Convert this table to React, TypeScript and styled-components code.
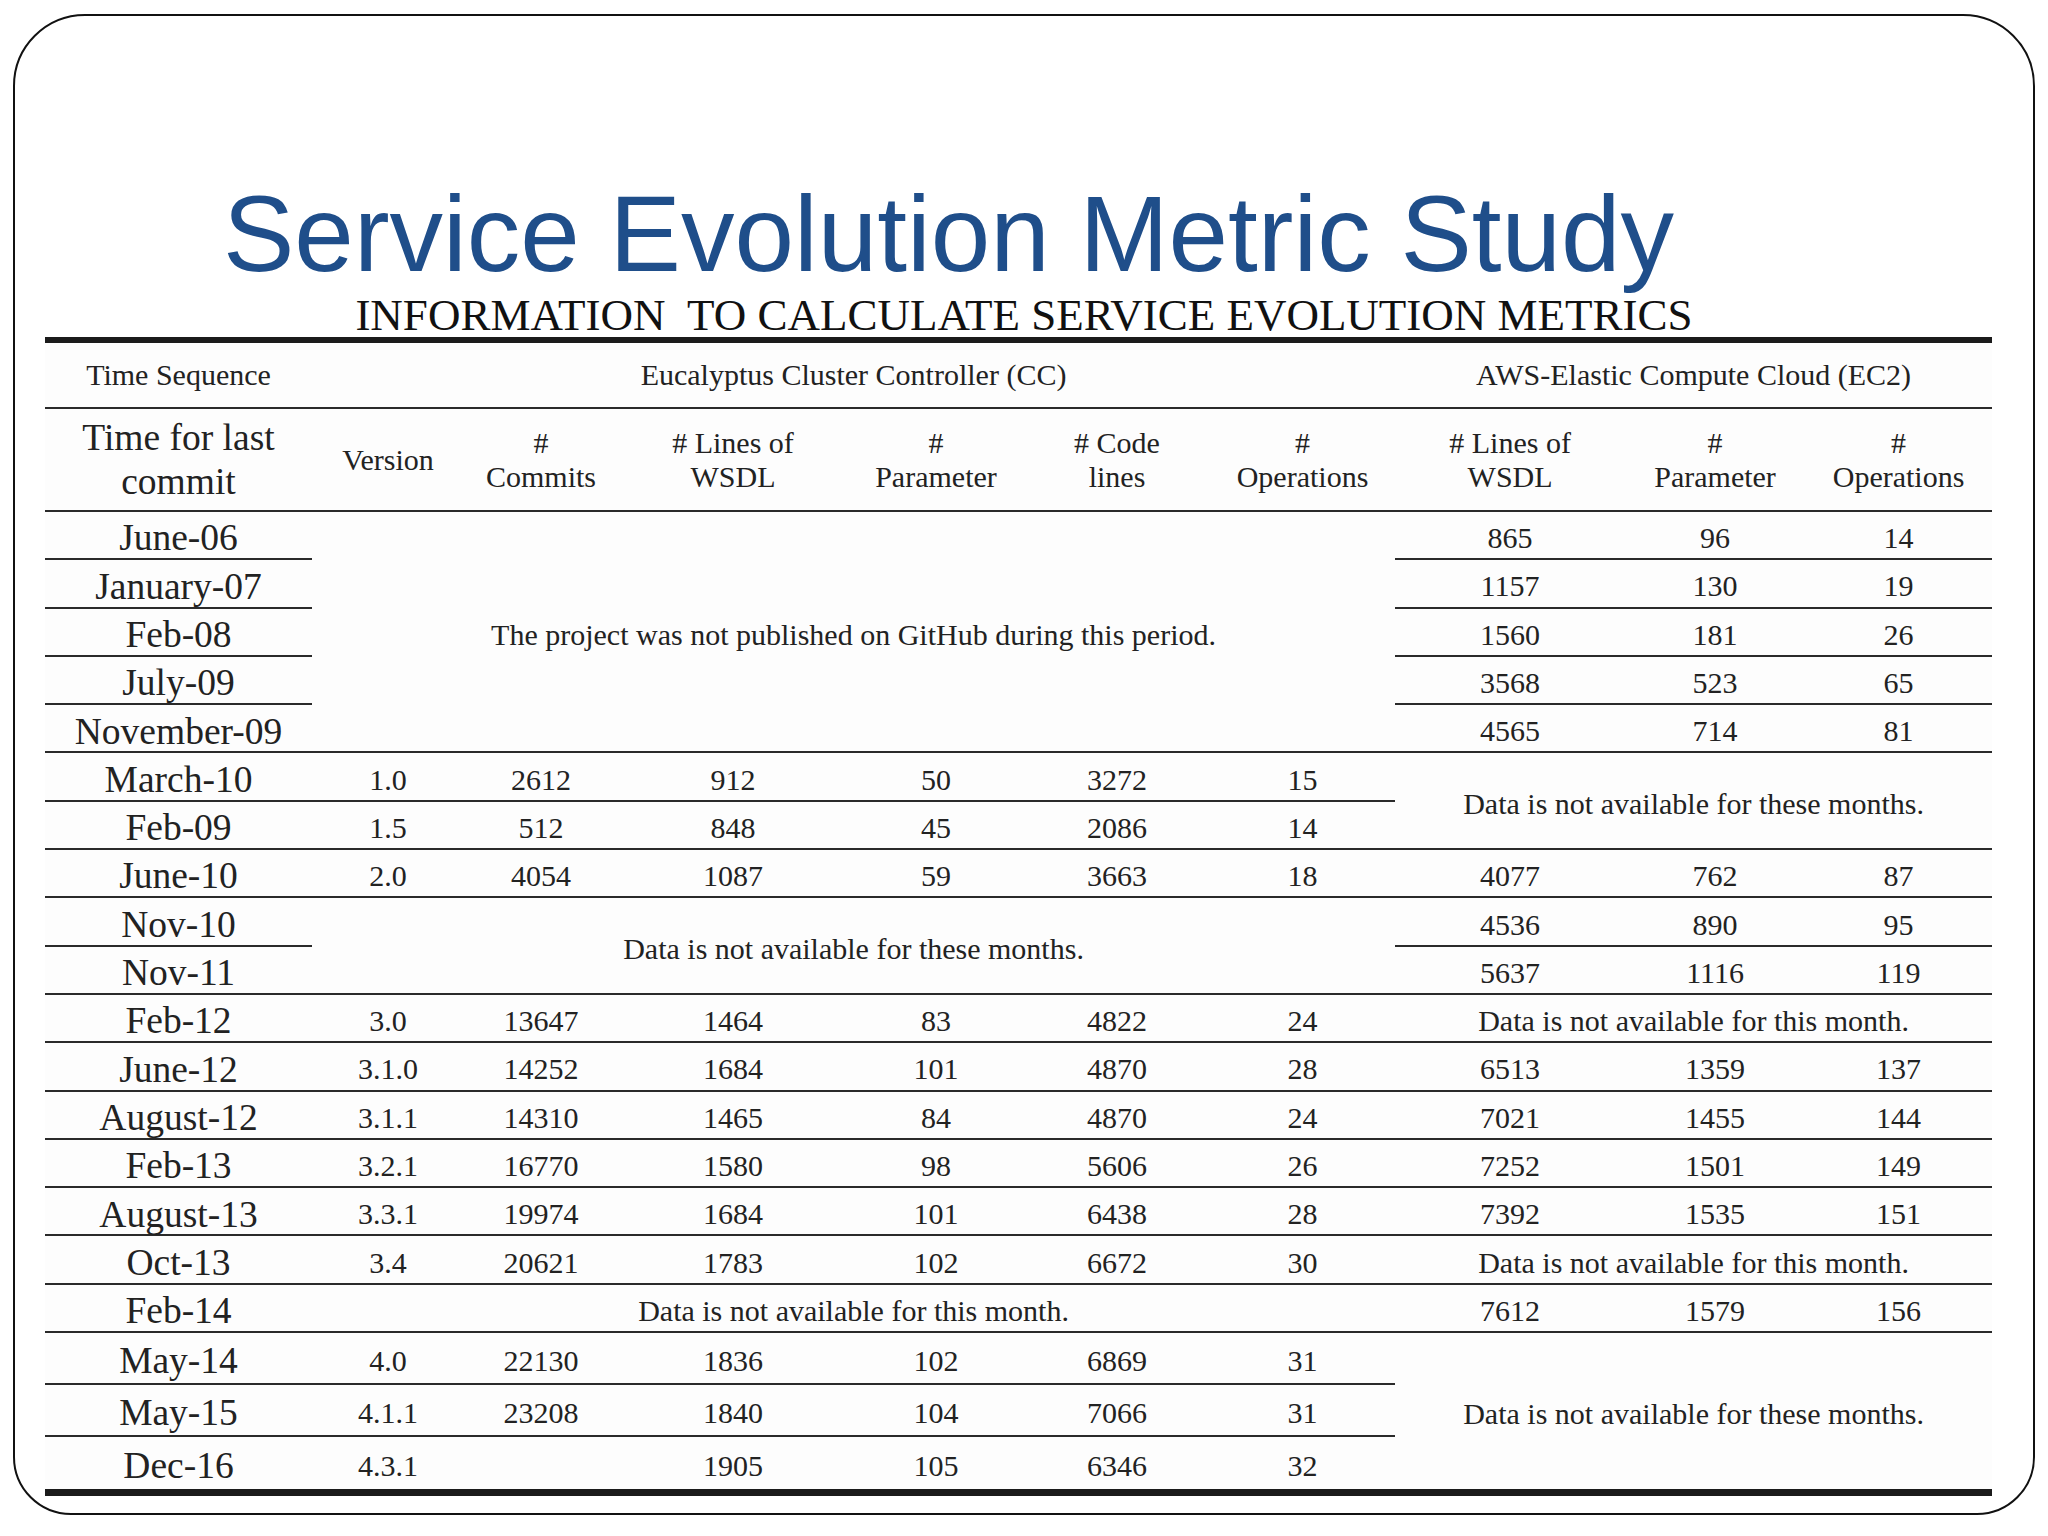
import React from "react";
import styled, { createGlobalStyle } from "styled-components";

const GlobalStyle = createGlobalStyle`
  html, body {
    margin: 0;
    padding: 0;
    background: #ffffff;
  }
  body {
    width: 2048px;
    height: 1536px;
    overflow: hidden;
  }
`;

const Page = styled.div`
  box-sizing: border-box;
  width: 2048px;
  height: 1536px;
  padding: 14px 13px 21px 13px;
  background: #ffffff;
`;

const Frame = styled.div`
  box-sizing: border-box;
  height: 100%;
  border: 2px solid #111111;
  border-radius: 72px 72px 58px 58px;
  padding-top: 165px;
  display: flex;
  flex-direction: column;
`;

const Title = styled.h1`
  margin: 0;
  padding-left: 208px;
  font-family: "Liberation Sans", Arial, sans-serif;
  font-weight: 400;
  font-size: 107px;
  line-height: 107px;
  color: #1f4e8a;
  white-space: nowrap;
`;

const Subtitle = styled.h2`
  margin: 5px 0 0 0;
  text-align: center;
  font-family: "Liberation Serif", "Times New Roman", serif;
  font-weight: 400;
  font-size: 45px;
  line-height: 44px;
  color: #111111;
  white-space: nowrap;
`;

const Table = styled.table`
  margin-left: 30px;
  width: 1947px;
  table-layout: fixed;
  border-collapse: separate;
  border-spacing: 0;
  border-top: 6px solid #1b1b1b;
  border-bottom: 7px solid #1b1b1b;
  font-family: "Liberation Serif", "Times New Roman", serif;
  color: #222222;
  background: #fdfdfd;
`;

const Row = styled.tr<{ $h: number }>`
  height: ${(p) => p.$h}px;
`;

const HeadCell = styled.th<{ $big?: boolean }>`
  box-sizing: border-box;
  padding: 0;
  text-align: center;
  vertical-align: middle;
  font-weight: 400;
  font-size: ${(p) => (p.$big ? "37.5px" : "30px")};
  line-height: ${(p) => (p.$big ? "44px" : "34px")};
  border-bottom: 2px solid #2a2a2a;
  white-space: nowrap;
`;

const Cell = styled.td<{ $big?: boolean; $line: boolean }>`
  box-sizing: border-box;
  padding: 6px 0 0 0;
  text-align: center;
  vertical-align: middle;
  font-size: ${(p) => (p.$big ? "37.5px" : "30px")};
  line-height: 1;
  border-bottom: ${(p) => (p.$line ? "2px solid #2a2a2a" : "0")};
  white-space: nowrap;
`;

type Span = { text: string; rows: number };
type Part = string[] | Span | "covered";
type DataRow = { t: string; cc: Part; ec: Part; h: number };

const NA_MONTHS = "Data is not available for these months.";
const NA_MONTH = "Data is not available for this month.";

const N = 48.3;
const T = 52;

const rows: DataRow[] = [
  { t: "June-06", cc: { text: "The project was not published on GitHub during this period.", rows: 5 }, ec: ["865", "96", "14"], h: N },
  { t: "January-07", cc: "covered", ec: ["1157", "130", "19"], h: N },
  { t: "Feb-08", cc: "covered", ec: ["1560", "181", "26"], h: N },
  { t: "July-09", cc: "covered", ec: ["3568", "523", "65"], h: N },
  { t: "November-09", cc: "covered", ec: ["4565", "714", "81"], h: N },
  { t: "March-10", cc: ["1.0", "2612", "912", "50", "3272", "15"], ec: { text: NA_MONTHS, rows: 2 }, h: N },
  { t: "Feb-09", cc: ["1.5", "512", "848", "45", "2086", "14"], ec: "covered", h: N },
  { t: "June-10", cc: ["2.0", "4054", "1087", "59", "3663", "18"], ec: ["4077", "762", "87"], h: N },
  { t: "Nov-10", cc: { text: NA_MONTHS, rows: 2 }, ec: ["4536", "890", "95"], h: N },
  { t: "Nov-11", cc: "covered", ec: ["5637", "1116", "119"], h: N },
  { t: "Feb-12", cc: ["3.0", "13647", "1464", "83", "4822", "24"], ec: { text: NA_MONTH, rows: 1 }, h: N },
  { t: "June-12", cc: ["3.1.0", "14252", "1684", "101", "4870", "28"], ec: ["6513", "1359", "137"], h: N },
  { t: "August-12", cc: ["3.1.1", "14310", "1465", "84", "4870", "24"], ec: ["7021", "1455", "144"], h: N },
  { t: "Feb-13", cc: ["3.2.1", "16770", "1580", "98", "5606", "26"], ec: ["7252", "1501", "149"], h: N },
  { t: "August-13", cc: ["3.3.1", "19974", "1684", "101", "6438", "28"], ec: ["7392", "1535", "151"], h: N },
  { t: "Oct-13", cc: ["3.4", "20621", "1783", "102", "6672", "30"], ec: { text: NA_MONTH, rows: 1 }, h: N },
  { t: "Feb-14", cc: { text: NA_MONTH, rows: 1 }, ec: ["7612", "1579", "156"], h: N },
  { t: "May-14", cc: ["4.0", "22130", "1836", "102", "6869", "31"], ec: { text: NA_MONTHS, rows: 3 }, h: T },
  { t: "May-15", cc: ["4.1.1", "23208", "1840", "104", "7066", "31"], ec: "covered", h: T },
  { t: "Dec-16", cc: ["4.3.1", "", "1905", "105", "6346", "32"], ec: "covered", h: T },
];

const colWidths = [267, 152, 154, 230, 176, 186, 185, 230, 180, 187];

const lastIndex = rows.length - 1;

function renderPart(part: Part, span: number, i: number, key: string) {
  if (part === "covered") return null;
  if (Array.isArray(part)) {
    const line = i !== lastIndex;
    return part.map((v, j) => (
      <Cell key={`${key}${j}`} $line={line}>
        {v}
      </Cell>
    ));
  }
  const line = i + part.rows - 1 !== lastIndex;
  return (
    <Cell key={key} colSpan={span} rowSpan={part.rows} $line={line}>
      {part.text}
    </Cell>
  );
}

export default function App() {
  return (
    <>
      <GlobalStyle />
      <Page>
        <Frame>
          <Title>Service Evolution Metric Study</Title>
          <Subtitle>INFORMATION&nbsp; TO CALCULATE SERVICE EVOLUTION METRICS</Subtitle>
          <Table>
            <colgroup>
              {colWidths.map((w, i) => (
                <col key={i} style={{ width: w }} />
              ))}
            </colgroup>
            <thead>
              <Row $h={66}>
                <HeadCell>Time Sequence</HeadCell>
                <HeadCell colSpan={6}>Eucalyptus Cluster Controller (CC)</HeadCell>
                <HeadCell colSpan={3}>AWS-Elastic Compute Cloud (EC2)</HeadCell>
              </Row>
              <Row $h={103}>
                <HeadCell $big>
                  Time for last
                  <br />
                  commit
                </HeadCell>
                <HeadCell>Version</HeadCell>
                <HeadCell>
                  #
                  <br />
                  Commits
                </HeadCell>
                <HeadCell>
                  # Lines of
                  <br />
                  WSDL
                </HeadCell>
                <HeadCell>
                  #
                  <br />
                  Parameter
                </HeadCell>
                <HeadCell>
                  # Code
                  <br />
                  lines
                </HeadCell>
                <HeadCell>
                  #
                  <br />
                  Operations
                </HeadCell>
                <HeadCell>
                  # Lines of
                  <br />
                  WSDL
                </HeadCell>
                <HeadCell>
                  #
                  <br />
                  Parameter
                </HeadCell>
                <HeadCell>
                  #
                  <br />
                  Operations
                </HeadCell>
              </Row>
            </thead>
            <tbody>
              {rows.map((r, i) => (
                <Row key={r.t} $h={r.h}>
                  <Cell $big $line={i !== lastIndex}>
                    {r.t}
                  </Cell>
                  {renderPart(r.cc, 6, i, "cc")}
                  {renderPart(r.ec, 3, i, "ec")}
                </Row>
              ))}
            </tbody>
          </Table>
        </Frame>
      </Page>
    </>
  );
}
